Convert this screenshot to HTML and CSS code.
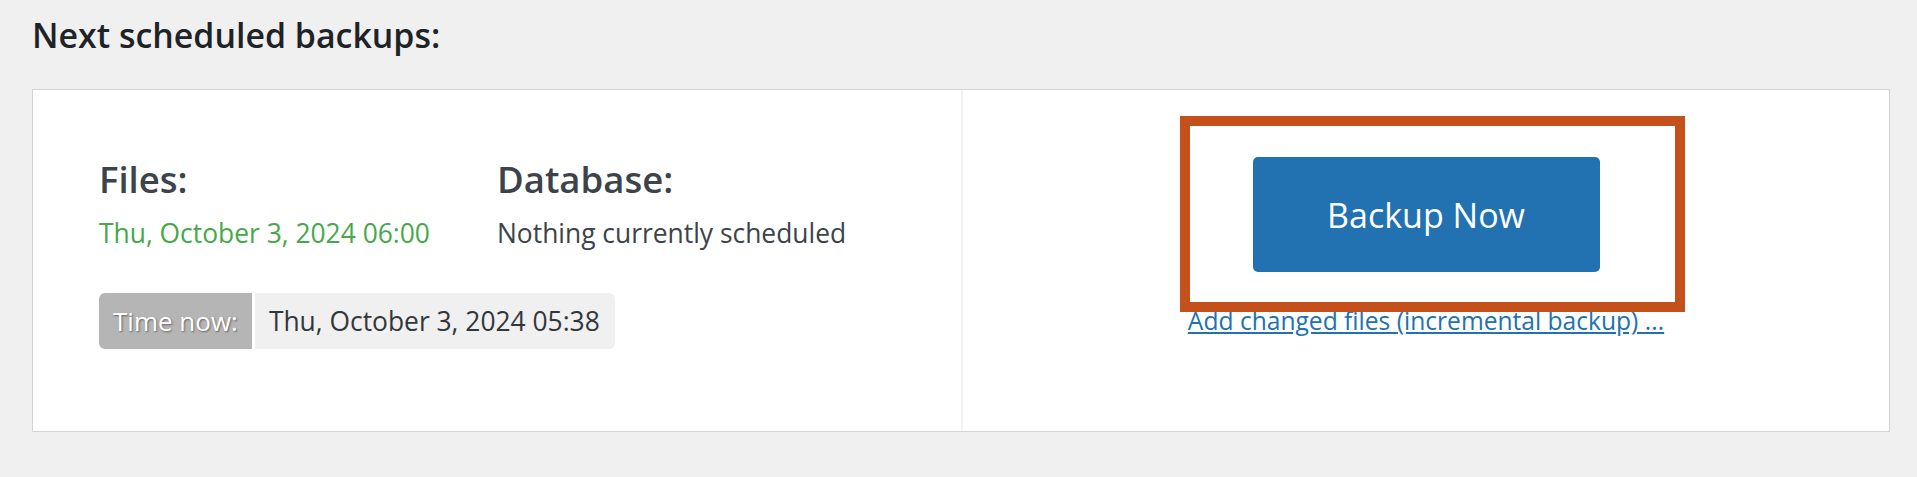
FILE: index.html
```html
<!DOCTYPE html>
<html lang="en">
<head>
<meta charset="utf-8">
<title>Next scheduled backups</title>
<link rel="stylesheet" href="styles.css">
</head>
<body>
<main class="page">
  <h2 class="section-title">Next scheduled backups:</h2>
  <div class="card">
    <div class="col col-schedule">
      <div class="schedule-row">
        <div class="schedule-item schedule-files">
          <h3 class="item-title">Files:</h3>
          <div class="item-date item-date-green">Thu, October 3, 2024 06:00</div>
        </div>
        <div class="schedule-item">
          <h3 class="item-title">Database:</h3>
          <div class="item-date">Nothing currently scheduled</div>
        </div>
      </div>
      <div class="time-now">
        <span class="time-now-label">Time now:</span>
        <span class="time-now-value">Thu, October 3, 2024 05:38</span>
      </div>
    </div>
    <div class="col col-actions">
      <button type="button" class="btn-backup">Backup Now</button>
      <a href="#" class="incremental-link">Add changed files (incremental backup) ...</a>
      <div class="highlight-box"></div>
    </div>
  </div>
</main>
</body>
</html>
```
FILE: styles.css
```css
html, body {
  margin: 0;
  padding: 0;
  background: #f0f0f1;
}

.page {
  padding: 15px 27px 0 32px;
  font-family: "Open Sans", "Noto Sans", sans-serif;
  color: #3c434a;
}

.section-title {
  margin: 0 0 34px;
  font-size: 33.9px;
  line-height: 40px;
  font-weight: 600;
  color: #1d2327;
}

.card {
  display: grid;
  grid-template-columns: 1fr 1fr;
  background: #fff;
  border: 1px solid #d3d3d5;
  box-shadow: 0 1px 1px rgba(0, 0, 0, 0.04);
}

.col-schedule {
  padding: 67px 0 82px 66px;
}

.schedule-row {
  display: flex;
}

.schedule-files {
  width: 398px;
}

.item-title {
  margin: 0;
  font-size: 36.5px;
  line-height: 44px;
  font-weight: 600;
  color: #3c434a;
}

.item-date {
  margin-top: 16px;
  font-size: 26.4px;
  line-height: 32px;
  color: #3c434a;
}

.item-date-green {
  color: #46a84b;
}

.time-now {
  display: inline-flex;
  gap: 3px;
  margin-top: 44px;
  height: 56px;
  font-size: 26.4px;
  line-height: 56px;
}

.time-now-label {
  padding: 0 14px;
  background: #b5b5b5;
  color: #fff;
  font-size: 26px;
  border-radius: 6px 0 0 6px;
  text-shadow: 1px 1px 2px rgba(0, 0, 0, 0.45);
}

.time-now-value {
  padding: 0 15px 0 14px;
  background: #f0f0f0;
  color: #32373c;
  border-radius: 0 6px 6px 0;
}

.col-actions {
  position: relative;
  display: flex;
  flex-direction: column;
  align-items: center;
  padding-top: 67px;
  border-left: 2px solid #f3f3f3;
}

.btn-backup {
  display: flex;
  align-items: center;
  justify-content: center;
  width: 347px;
  height: 115px;
  padding: 0;
  border: 0;
  border-radius: 5px;
  background: #2271b1;
  color: #fff;
  font-family: inherit;
  font-size: 34px;
  line-height: 40px;
  cursor: pointer;
}

.incremental-link {
  margin-top: 34px;
  font-size: 24.6px;
  line-height: 30px;
  color: #2271b1;
  text-decoration: underline;
  text-underline-offset: 2px;
}

.highlight-box {
  position: absolute;
  left: 217px;
  top: 26px;
  width: 505px;
  height: 196px;
  box-sizing: border-box;
  border: 10px solid #c4511c;
  pointer-events: none;
}
```
